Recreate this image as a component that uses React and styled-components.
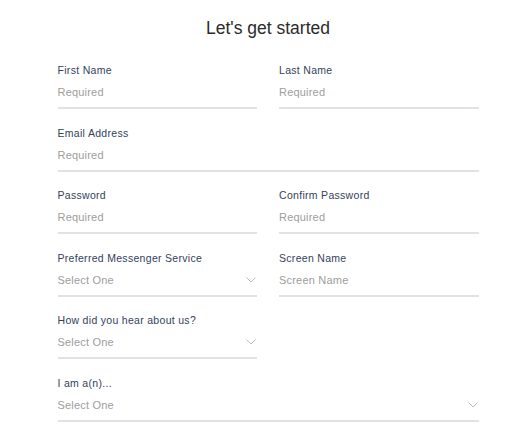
import React from "react";
import styled, { createGlobalStyle } from "styled-components";

const GlobalStyle = createGlobalStyle`
  body {
    margin: 0;
    background: #ffffff;
    font-family: "Liberation Sans", Arial, sans-serif;
  }
`;

const Page = styled.div`
  width: 492px;
  padding: 16px 0 0 22px;
  display: flex;
  flex-direction: column;
  align-items: center;
`;

const Title = styled.h1`
  margin: 0;
  font-size: 17.5px;
  line-height: 24px;
  font-weight: 400;
  color: #2b2b2b;
`;

const Form = styled.form`
  width: 421px;
  margin-top: 23px;
  display: grid;
  grid-template-columns: 1fr 1fr;
  column-gap: 22px;
  row-gap: 16.5px;
`;

const Field = styled.label`
  display: flex;
  flex-direction: column;
  grid-column: ${({ wide }) => (wide ? "1 / span 2" : "auto")};
`;

const Label = styled.span`
  font-size: 10.5px;
  line-height: 14px;
  color: #34425a;
  letter-spacing: 0.3px;
`;

const InputRow = styled.div`
  display: flex;
  align-items: center;
  justify-content: space-between;
  margin-top: 6px;
  height: 18px;
  padding-bottom: 6px;
  border-bottom: 2px solid #dfe2e6;
`;

const Placeholder = styled.span`
  font-size: 11px;
  color: #9d9d9d;
  letter-spacing: 0.2px;
`;

const Chevron = () => (
  <svg width="10" height="6" viewBox="0 0 10 6" style={{ marginRight: 1 }}>
    <path d="M0.5 0.5 L5 5 L9.5 0.5" fill="none" stroke="#b9bdc3" strokeWidth="1" />
  </svg>
);

const Input = ({ label, placeholder = "Required", select, wide }) => (
  <Field wide={wide}>
    <Label>{label}</Label>
    <InputRow>
      <Placeholder>{placeholder}</Placeholder>
      {select && <Chevron />}
    </InputRow>
  </Field>
);

export default function App() {
  return (
    <>
      <GlobalStyle />
      <Page>
        <Title>Let's get started</Title>
        <Form>
          <Input label="First Name" />
          <Input label="Last Name" />
          <Input label="Email Address" wide />
          <Input label="Password" />
          <Input label="Confirm Password" />
          <Input label="Preferred Messenger Service" placeholder="Select One" select />
          <Input label="Screen Name" placeholder="Screen Name" />
          <Input label="How did you hear about us?" placeholder="Select One" select />
          <div />
          <Input label="I am a(n)..." placeholder="Select One" select wide />
        </Form>
      </Page>
    </>
  );
}
